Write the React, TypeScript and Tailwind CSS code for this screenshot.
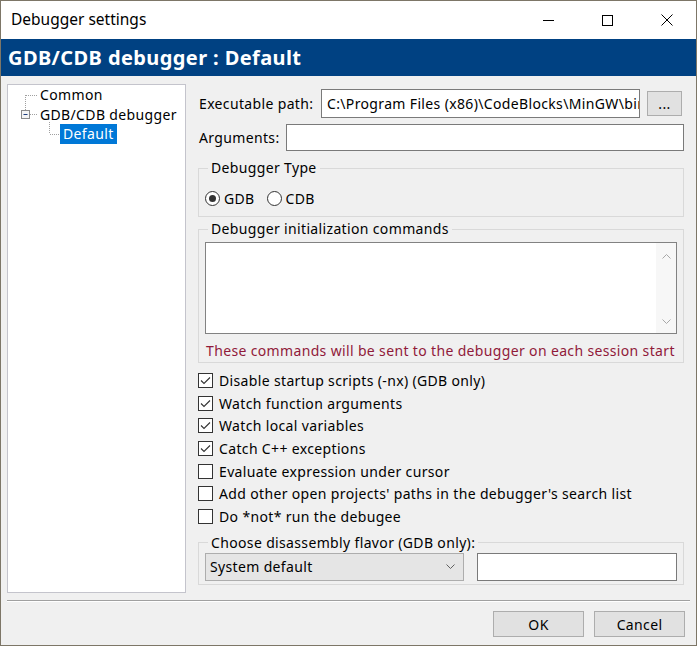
import type { ReactNode } from 'react';

const font = "font-['Noto_Sans','Liberation_Sans',sans-serif]";

function CheckRow({ checked, children }: { checked?: boolean; children: ReactNode }) {
  return (
    <div className="h-[22.7px] flex items-center gap-[6px]">
      <span className="w-[15px] h-[15px] border border-[#333333] bg-white shrink-0 flex items-center justify-center">
        {checked && (
          <svg width="13" height="13" viewBox="0 0 13 13">
            <path d="M2 6.5 L5 9.5 L11 3.5" fill="none" stroke="#333333" strokeWidth="1.1" />
          </svg>
        )}
      </span>
      <span className="whitespace-nowrap">{children}</span>
    </div>
  );
}

function Radio({ checked, label }: { checked?: boolean; label: string }) {
  return (
    <div className="flex items-center gap-[4px]">
      <span className="w-[15px] h-[15px] rounded-full border border-[#333333] bg-white flex items-center justify-center">
        {checked && <span className="w-[7px] h-[7px] rounded-full bg-[#333333]" />}
      </span>
      <span>{label}</span>
    </div>
  );
}

function Chevron({ dir, color }: { dir: 'up' | 'down'; color: string }) {
  return (
    <svg width="9" height="5" viewBox="0 0 9 5">
      <path
        d={dir === 'up' ? 'M0.5 4.5 L4.5 0.5 L8.5 4.5' : 'M0.5 0.5 L4.5 4.5 L8.5 0.5'}
        fill="none"
        stroke={color}
        strokeWidth="1"
      />
    </svg>
  );
}

export default function App() {
  return (
    <div
      className={`w-[697px] h-[646px] border border-[#7d7667] bg-[#f0f0f0] flex flex-col text-[14px] tracking-[0.35px] text-black overflow-hidden ${font}`}
    >
      {/* title bar */}
      <div className="h-[38px] bg-white flex items-center shrink-0">
        <span className="pl-[10px] text-[15.5px] tracking-normal">Debugger settings</span>
        <div className="ml-auto flex h-full">
          <div className="w-[59px] flex items-center justify-center">
            <span className="w-[11px] border-t border-black" />
          </div>
          <div className="w-[59px] flex items-center justify-center">
            <span className="w-[11px] h-[11px] border border-black" />
          </div>
          <div className="w-[59px] flex items-center justify-center">
            <svg width="12" height="12" viewBox="0 0 12 12">
              <path d="M0.5 0.5 L11.5 11.5 M11.5 0.5 L0.5 11.5" stroke="#000" strokeWidth="1" />
            </svg>
          </div>
        </div>
      </div>

      {/* header band */}
      <div className="h-[37px] bg-[#004182] flex items-center pl-[7px] shrink-0">
        <span className="text-white font-bold text-[20px] tracking-[0.4px]">GDB/CDB debugger : Default</span>
      </div>

      {/* main */}
      <div className="flex pl-[6px] pr-[12px] pt-[8px] gap-[12px]">
        {/* tree */}
        <div className="relative w-[179px] h-[509px] bg-white border border-[#c4c4cc] shrink-0">
          <svg className="absolute inset-0" width="177" height="60" viewBox="0 0 177 60">
            <g stroke="#a0a0a0" strokeWidth="1" strokeDasharray="1 1" fill="none">
              <path d="M17.5 10 V25" />
              <path d="M18 10.5 H30" />
              <path d="M22 29.5 H30" />
              <path d="M41.5 37 V49" />
              <path d="M42 49.5 H52" />
            </g>
            <rect x="13.5" y="25.5" width="8" height="8" fill="#f4f4f4" stroke="#8a8a8a" />
            <path d="M15.5 29.5 H19.5" stroke="#1f3f7f" strokeWidth="1" />
          </svg>
          <div className="h-[19.5px] flex items-center pl-[32px]">Common</div>
          <div className="h-[19.5px] flex items-center pl-[32px]">GDB/CDB debugger</div>
          <div className="h-[19.5px] flex items-center pl-[52px]">
            <span className="bg-[#0078d7] text-white px-[3px] h-[20px] flex items-center">Default</span>
          </div>
        </div>

        {/* right column */}
        <div className="flex-1 min-w-0 pt-[5px] flex flex-col">
          <div className="h-[29px] flex items-center">
            <span className="w-[123px] pl-[1px] shrink-0 whitespace-nowrap">Executable path:</span>
            <div className="flex-1 min-w-0 h-[29px] border border-[#7a7a7a] bg-white flex items-center pl-[5px] overflow-hidden whitespace-nowrap">
              C:\Program Files (x86)\CodeBlocks\MinGW\bin\gdb32.exe
            </div>
            <div className="ml-[7px] mr-[2px] w-[35px] h-[25px] bg-[#e1e1e1] border border-[#adadad] flex items-center justify-center shrink-0">
              ...
            </div>
          </div>

          <div className="mt-[6px] h-[27px] flex items-center">
            <span className="w-[88px] pl-[1px] shrink-0">Arguments:</span>
            <div className="flex-1 min-w-0 h-[27px] border border-[#7a7a7a] bg-white" />
          </div>

          <fieldset className="mt-[7px] border border-[#d9d9d9] min-w-0">
            <legend className="ml-[9px] px-[3px] h-[20px] leading-[20px]">Debugger Type</legend>
            <div className="mt-[10px] mb-[8px] h-[20px] flex items-center pl-[6px] gap-[12px]">
              <Radio checked label="GDB" />
              <Radio label="CDB" />
            </div>
          </fieldset>

          <fieldset className="mt-[2px] border border-[#d9d9d9] min-w-0">
            <legend className="ml-[9px] px-[3px] h-[20px] leading-[20px]">Debugger initialization commands</legend>
            <div className="mt-[3px] mx-[6px] h-[92px] border border-[#828282] bg-white flex justify-end">
              <div className="w-[20px] bg-[#f7f7f7] flex flex-col items-center justify-between pt-[11px] pb-[9px]">
                <Chevron dir="up" color="#a8a8a8" />
                <Chevron dir="down" color="#a8a8a8" />
              </div>
            </div>
            <div className="mt-[7px] mb-[1px] h-[20px] leading-[20px] pl-[7px] text-[#901a3a] whitespace-nowrap">
              These commands will be sent to the debugger on each session start
            </div>
          </fieldset>

          <div className="mt-[6px] flex flex-col">
            <CheckRow checked>Disable startup scripts (-nx) (GDB only)</CheckRow>
            <CheckRow checked>Watch function arguments</CheckRow>
            <CheckRow checked>Watch local variables</CheckRow>
            <CheckRow checked>Catch C++ exceptions</CheckRow>
            <CheckRow>Evaluate expression under cursor</CheckRow>
            <CheckRow>Add other open projects' paths in the debugger's search list</CheckRow>
            <CheckRow>Do *not* run the debugee</CheckRow>
          </div>

          <fieldset className="mt-[5px] border border-[#d9d9d9] min-w-0">
            <legend className="ml-[9px] px-[3px] h-[20px] leading-[20px]">Choose disassembly flavor (GDB only):</legend>
            <div className="flex items-center gap-[13px] px-[6px] pb-[3px]">
              <div className="w-[259px] h-[28px] bg-[#e5e5e5] border border-[#adadad] flex items-center pl-[4px] pr-[8px] shrink-0">
                <span>System default</span>
                <span className="ml-auto">
                  <Chevron dir="down" color="#606060" />
                </span>
              </div>
              <div className="flex-1 min-w-0 h-[28px] border border-[#7a7a7a] bg-white" />
            </div>
          </fieldset>
        </div>
      </div>

      {/* separator */}
      <div className="mt-[7px] mx-[6px] border-t border-[#a0a0a0] border-b border-b-white" />

      {/* buttons */}
      <div className="mt-[9px] flex justify-end gap-[10px] pr-[11px]">
        <div className="w-[91px] h-[26px] bg-[#e1e1e1] border border-[#adadad] flex items-center justify-center">
          OK
        </div>
        <div className="w-[91px] h-[26px] bg-[#e1e1e1] border border-[#adadad] flex items-center justify-center">
          Cancel
        </div>
      </div>
    </div>
  );
}
